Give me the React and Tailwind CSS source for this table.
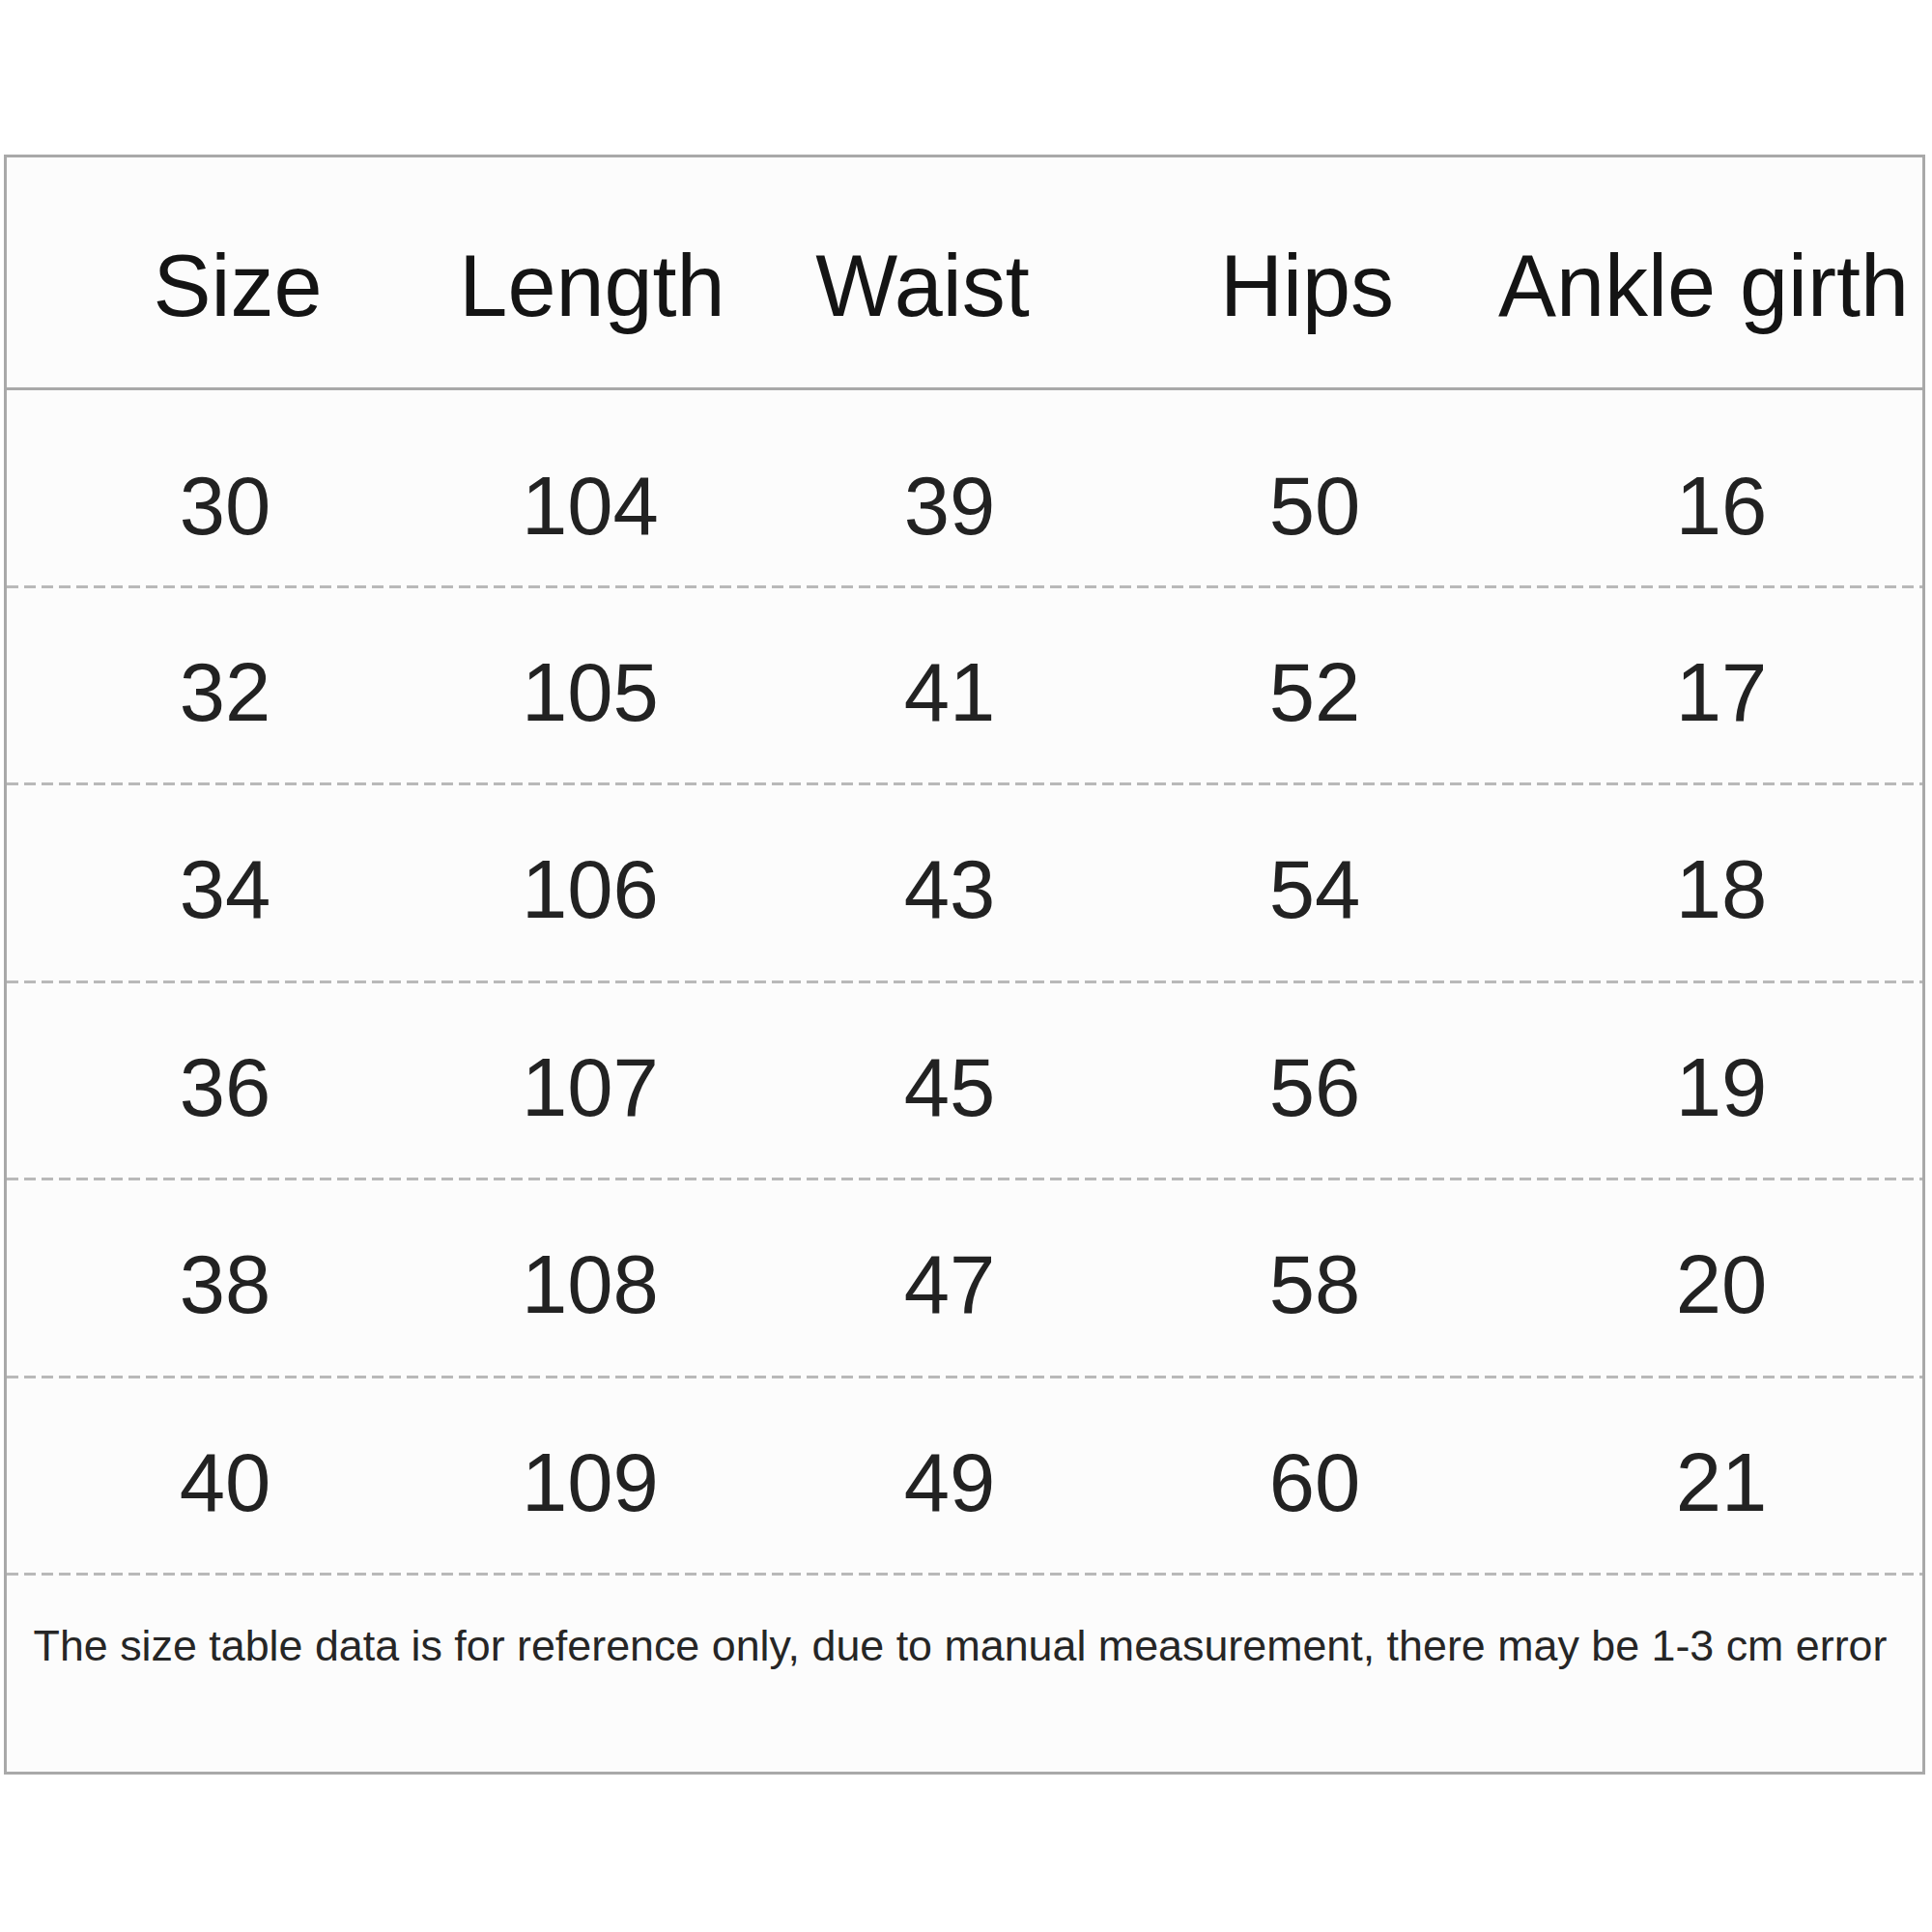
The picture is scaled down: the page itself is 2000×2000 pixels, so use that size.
const HEADERS = ['Size', 'Length', 'Waist', 'Hips', 'Ankle girth']

const ROWS = [
  ['30', '104', '39', '50', '16'],
  ['32', '105', '41', '52', '17'],
  ['34', '106', '43', '54', '18'],
  ['36', '107', '45', '56', '19'],
  ['38', '108', '47', '58', '20'],
  ['40', '109', '49', '60', '21'],
]

const DashLine = () => (
  <div className="h-[3px] w-full bg-[repeating-linear-gradient(90deg,#b9b9b9_0px,#b9b9b9_12px,transparent_12px,transparent_18px)]" />
)

export default function App() {
  return (
    <div
      className="w-[2000px] h-[2000px] bg-white pt-[160px] pl-[4px]"
      style={{ fontFamily: '"Liberation Sans", Arial, sans-serif' }}
    >
      <div className="w-[1989px] h-[1677px] border-[3px] border-[#a9a9a9] bg-[#fcfcfc] flex flex-col">
        {/* header */}
        <div className="h-[238px] grid grid-cols-[478px_256px_428px_368px_453px] pt-[88px] text-[90px] leading-none text-[#141414]">
          {HEADERS.map((h) => (
            <div key={h} className="flex justify-center whitespace-nowrap">
              {h}
            </div>
          ))}
        </div>
        <div className="h-[3px] w-full bg-[#a9a9a9]" />

        {/* rows */}
        {ROWS.map((row, i) => (
          <div key={i}>
            <div
              className={
                i === 0
                  ? 'h-[201.5px] grid grid-cols-[342px_414px_330px_426px_416px] pl-[55px] pt-[77px] text-[85px] leading-none text-[#222]'
                  : 'h-[201.5px] grid grid-cols-[342px_414px_330px_426px_416px] pl-[55px] pt-[65px] text-[85px] leading-none text-[#222]'
              }
            >
              {row.map((v, j) => (
                <div key={j} className="flex justify-center">
                  {v}
                </div>
              ))}
            </div>
            <DashLine />
          </div>
        ))}

        {/* note */}
        <div className="flex-1 flex justify-center pt-[50px] pr-[9px]">
          <span className="whitespace-nowrap text-[44.8px] leading-none text-[#262626]">
            The size table data is for reference only, due to manual measurement, there may be 1-3 cm error
          </span>
        </div>
      </div>
    </div>
  )
}
